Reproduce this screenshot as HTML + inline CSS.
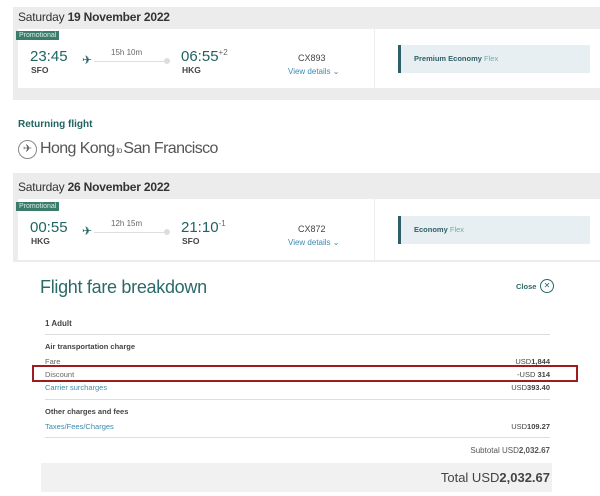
<!DOCTYPE html>
<html><head><meta charset="utf-8"><style>
*{margin:0;padding:0;box-sizing:border-box}
body{width:600px;height:496px;background:#fff;font-family:"Liberation Sans",sans-serif;position:relative;overflow:hidden;color:#333}
.a{position:absolute;white-space:nowrap}
.card{position:absolute;left:13px;width:587px;background:#ececec}
.panel{position:absolute;left:5px;right:0;background:#fff}
.hd{font-size:12px;color:#333;letter-spacing:-0.2px}
.tag{background:#3b7c6b;color:#d8eee6;font-size:7px;padding:1px 3px;height:9px;line-height:7px}
.tm{font-size:15px;color:#1f6462}
.ap{font-size:8.5px;font-weight:bold;color:#444}
.dur{font-size:8px;color:#666}
.ln{height:1px;background:#ddd}
.dot{width:6px;height:6px;border-radius:50%;background:#ddd}
.fn{font-size:9px;color:#444}
.vd{font-size:8px;color:#3b8bb0}
.cls{background:#e8eff2;border-left:3px solid #2f5f66;height:28px;width:192px;font-size:7.5px;line-height:28px;padding-left:13px;color:#2f5f66}
.cls b{font-weight:bold}
.cls span{color:#7aa;font-weight:normal}
.sm{font-size:7.5px;color:#444}
.hr{position:absolute;left:45px;width:505px;height:1px;background:#ddd}
</style></head><body>

<div class="card" style="top:7px;height:93px">
 <div class="a hd" style="left:5px;top:3px">Saturday <b>19 November 2022</b></div>
 <div class="panel" style="top:22px;height:59px"></div>
 <div class="a" style="left:361px;top:22px;width:1px;height:59px;background:#eee"></div>
</div>
<div class="a tag" style="left:16px;top:31px">Promotional</div>
<div class="a tm" style="left:30px;top:48px">23:45</div>
<div class="a ap" style="left:31px;top:65px">SFO</div>
<div class="a" style="left:82px;top:53px;font-size:12px;color:#1f6462">✈</div>
<div class="a dur" style="left:111px;top:48px">15h 10m</div>
<div class="a ln" style="left:94px;top:61px;width:71px"></div>
<div class="a dot" style="left:164px;top:58px"></div>
<div class="a tm" style="left:181px;top:48px">06:55<sup style="font-size:8px;color:#666">+2</sup></div>
<div class="a ap" style="left:182px;top:65px">HKG</div>
<div class="a fn" style="left:298px;top:53px">CX893</div>
<div class="a vd" style="left:288px;top:67px">View details ⌄</div>
<div class="a cls" style="left:398px;top:45px"><b>Premium Economy</b> <span>Flex</span></div>

<div class="a" style="left:18px;top:119px;font-size:10px;font-weight:bold;color:#1f6462">Returning flight</div>
<div class="a" style="left:18px;top:140px;width:19px;height:19px;border:1px solid #888;border-radius:50%;font-size:11px;line-height:17px;text-align:center;color:#666">✈</div>
<div class="a" style="left:40px;top:140px;font-size:16px;color:#555;letter-spacing:-0.6px">Hong Kong<span style="font-size:8px"> to </span>San Francisco</div>

<div class="card" style="top:173px;height:89px">
 <div class="a hd" style="left:5px;top:7px">Saturday <b>26 November 2022</b></div>
 <div class="panel" style="top:26px;height:61px"></div>
 <div class="a" style="left:361px;top:26px;width:1px;height:61px;background:#eee"></div>
</div>
<div class="a tag" style="left:16px;top:202px">Promotional</div>
<div class="a tm" style="left:30px;top:219px">00:55</div>
<div class="a ap" style="left:31px;top:236px">HKG</div>
<div class="a" style="left:82px;top:224px;font-size:12px;color:#1f6462">✈</div>
<div class="a dur" style="left:111px;top:219px">12h 15m</div>
<div class="a ln" style="left:94px;top:232px;width:71px"></div>
<div class="a dot" style="left:164px;top:229px"></div>
<div class="a tm" style="left:181px;top:219px">21:10<sup style="font-size:8px;color:#666">-1</sup></div>
<div class="a ap" style="left:182px;top:236px">SFO</div>
<div class="a fn" style="left:298px;top:224px">CX872</div>
<div class="a vd" style="left:288px;top:238px">View details ⌄</div>
<div class="a cls" style="left:398px;top:216px"><b>Economy</b> <span>Flex</span></div>

<div class="a" style="left:40px;top:277px;font-size:18px;color:#2a6a68;letter-spacing:-0.3px">Flight fare breakdown</div>
<div class="a" style="left:516px;top:282px;font-size:7.5px;font-weight:bold;color:#2a6a68">Close</div>
<div class="a" style="left:540px;top:279px;width:14px;height:14px;border:1px solid #2a6a68;border-radius:50%;font-size:8px;line-height:12px;text-align:center;color:#2a6a68">✕</div>

<div class="a sm" style="left:45px;top:319px;font-weight:bold;font-size:8px">1 Adult</div>
<div class="hr" style="top:334px"></div>
<div class="a sm" style="left:45px;top:342px;font-weight:bold">Air transportation charge</div>
<div class="a sm" style="left:45px;top:357px;color:#666">Fare</div>
<div class="a sm" style="right:50px;top:357px">USD<b>1,844</b></div>
<div class="a" style="left:32px;top:365px;width:546px;height:17px;border:2px solid #a01c1c"></div>
<div class="a sm" style="left:45px;top:370px;color:#666">Discount</div>
<div class="a sm" style="right:50px;top:370px">-USD <b>314</b></div>
<div class="a sm" style="left:45px;top:383px;color:#3b8bb0">Carrier surcharges</div>
<div class="a sm" style="right:50px;top:383px">USD<b>393.40</b></div>
<div class="hr" style="top:399px"></div>
<div class="a sm" style="left:45px;top:407px;font-weight:bold">Other charges and fees</div>
<div class="a sm" style="left:45px;top:422px;color:#3b8bb0">Taxes/Fees/Charges</div>
<div class="a sm" style="right:50px;top:422px">USD<b>109.27</b></div>
<div class="hr" style="top:437px"></div>
<div class="a" style="right:50px;top:446px;font-size:8px;color:#555">Subtotal USD<b>2,032.67</b></div>
<div class="a" style="left:41px;top:463px;width:511px;height:29px;background:#f1f1f1"></div>
<div class="a" style="right:50px;top:470px;font-size:13px;color:#444">Total USD<b>2,032.67</b></div>
</body></html>
